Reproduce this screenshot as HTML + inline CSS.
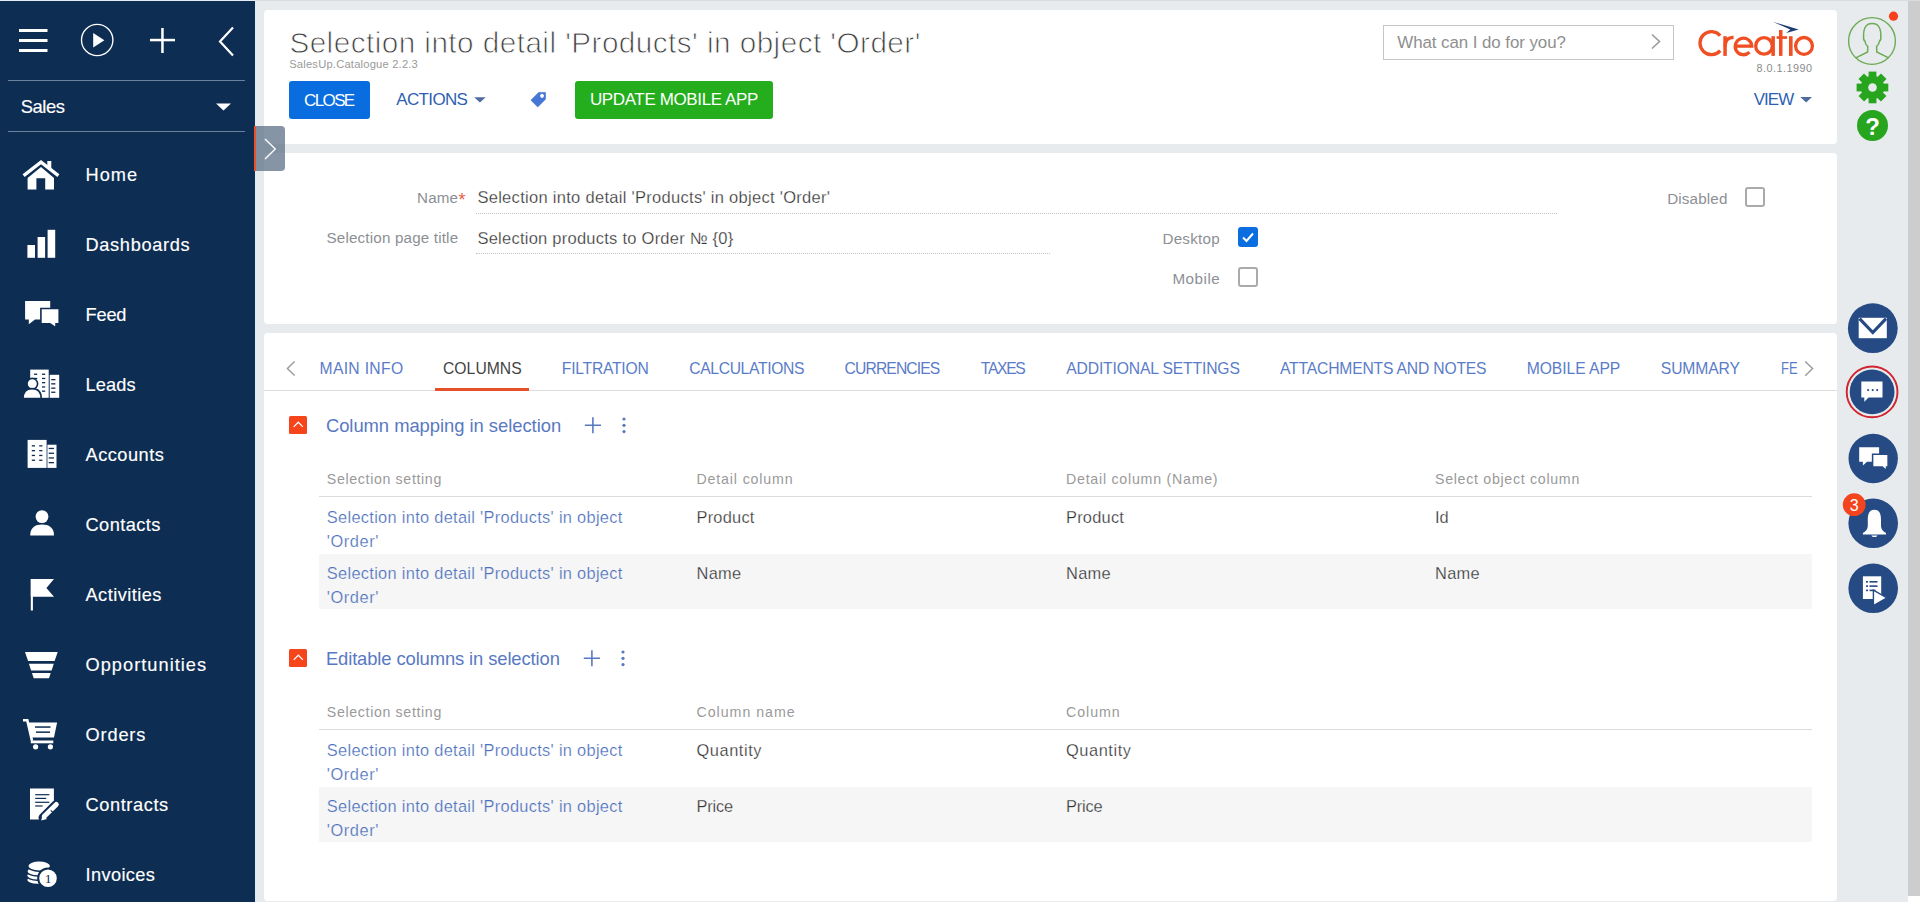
<!DOCTYPE html>
<html><head><meta charset="utf-8">
<style>
*{margin:0;padding:0;box-sizing:border-box}
html,body{width:1920px;height:902px;overflow:hidden;background:#e8ebed;font-family:"Liberation Sans",sans-serif}
.a{position:absolute;white-space:pre;line-height:1}
</style></head><body>
<div style="position:absolute;left:0px;top:0px;width:1920px;height:1px;background:#d9dcde"></div>
<div style="position:absolute;left:0px;top:0px;width:255px;height:1px;background:#e4edf4"></div>
<div style="position:absolute;left:1908px;top:1px;width:12px;height:895px;background:#cdcdcd"></div>
<div style="position:absolute;left:1908px;top:896px;width:12px;height:6px;background:#fff"></div>
<div style="position:absolute;left:0px;top:1px;width:255px;height:901px;background:#0e2d52"></div>
<div style="position:absolute;left:255px;top:1px;width:1px;height:901px;background:#e2ebf3"></div>
<div style="position:absolute;left:8px;top:80px;width:237px;height:1px;background:#6a809b"></div>
<div style="position:absolute;left:8px;top:131px;width:237px;height:1px;background:#6a809b"></div>
<svg style="position:absolute;left:0;top:0" width="255" height="80">
<rect x="19" y="29" width="28.5" height="3" fill="#fff"/>
<rect x="19" y="39" width="28.5" height="3" fill="#fff"/>
<rect x="19" y="49" width="28.5" height="3" fill="#fff"/>
<circle cx="97.2" cy="40" r="15.7" fill="none" stroke="#fff" stroke-width="1.35"/>
<path d="M93.2 33 L104.4 40.2 L93.2 47.4 Z" fill="#fff"/>
<rect x="150" y="38.8" width="25" height="2.5" fill="#fff"/>
<rect x="161.2" y="28" width="2.5" height="25" fill="#fff"/>
<path d="M233 27.5 L220 41.5 L233 55.5" fill="none" stroke="#fff" stroke-width="2.2"/>
</svg>
<div class="a " style="left:20.80px;top:98.32px;font-size:18.4px;color:#fff;letter-spacing:-0.482px;-webkit-text-stroke:0.15px #fff">Sales</div>
<svg style="position:absolute;left:214px;top:102px" width="20" height="10"><path d="M2 1.5 L17 1.5 L9.5 8.5 Z" fill="#fff"/></svg>
<div class="a " style="left:85.50px;top:165.89px;font-size:18.2px;color:#fff;letter-spacing:1.051px;-webkit-text-stroke:0.15px #fff">Home</div>
<div class="a " style="left:85.50px;top:235.89px;font-size:18.2px;color:#fff;letter-spacing:0.674px;-webkit-text-stroke:0.15px #fff">Dashboards</div>
<div class="a " style="left:85.50px;top:305.89px;font-size:18.2px;color:#fff;letter-spacing:-0.162px;-webkit-text-stroke:0.15px #fff">Feed</div>
<div class="a " style="left:85.50px;top:375.89px;font-size:18.2px;color:#fff;letter-spacing:0.128px;-webkit-text-stroke:0.15px #fff">Leads</div>
<div class="a " style="left:85.50px;top:445.89px;font-size:18.2px;color:#fff;letter-spacing:0.505px;-webkit-text-stroke:0.15px #fff">Accounts</div>
<div class="a " style="left:85.50px;top:515.89px;font-size:18.2px;color:#fff;letter-spacing:0.454px;-webkit-text-stroke:0.15px #fff">Contacts</div>
<div class="a " style="left:85.50px;top:585.89px;font-size:18.2px;color:#fff;letter-spacing:0.455px;-webkit-text-stroke:0.15px #fff">Activities</div>
<div class="a " style="left:85.50px;top:655.89px;font-size:18.2px;color:#fff;letter-spacing:1.037px;-webkit-text-stroke:0.15px #fff">Opportunities</div>
<div class="a " style="left:85.50px;top:725.89px;font-size:18.2px;color:#fff;letter-spacing:0.855px;-webkit-text-stroke:0.15px #fff">Orders</div>
<div class="a " style="left:85.50px;top:795.89px;font-size:18.2px;color:#fff;letter-spacing:0.602px;-webkit-text-stroke:0.15px #fff">Contracts</div>
<div class="a " style="left:85.50px;top:865.89px;font-size:18.2px;color:#fff;letter-spacing:0.390px;-webkit-text-stroke:0.15px #fff">Invoices</div>
<svg style="position:absolute;left:0;top:0" width="80" height="902">
<!-- home -->
<path d="M27.6 178 L41 167 L54 178 L54 189.5 L45.2 189.5 L45.2 178.2 L36.4 178.2 L36.4 189.5 L27.6 189.5 Z" fill="#fff"/>
<rect x="47.3" y="161" width="4" height="8" fill="#fff"/>
<path d="M23.6 175.6 L41 162.2 L58.4 175.6" fill="none" stroke="#fff" stroke-width="3.3"/>
<!-- dashboards -->
<rect x="27.4" y="245" width="7.6" height="12.8" fill="#fff"/>
<rect x="37.6" y="237" width="7.5" height="20.8" fill="#fff"/>
<rect x="47.6" y="229.8" width="7.6" height="28" fill="#fff"/>
<!-- feed -->
<path d="M25.1 301 L50.2 301 L50.2 319.5 L35 319.5 L28.8 324.2 L28.8 319.5 L25.1 319.5 Z" fill="#fff"/>
<path d="M40.9 308.5 L59.2 308.5 L59.2 323.7 L56 323.7 L56 328 L50 323.7 L40.9 323.7 Z" fill="#fff" stroke="#0e2d52" stroke-width="1.6"/>
<!-- leads -->
<rect x="30.2" y="369.6" width="18.5" height="28.2" fill="#fff"/>
<rect x="49.7" y="374.8" width="9.5" height="23" fill="#fff"/>
<g fill="#0e2d52">
<rect x="34" y="373.6" width="3.2" height="1.3"/><rect x="42" y="373.6" width="3.2" height="1.3"/>
<rect x="42" y="377.8" width="3.2" height="1.3"/><rect x="42" y="382" width="3.2" height="1.3"/><rect x="42" y="386.3" width="3.2" height="1.3"/><rect x="42" y="390.5" width="3.2" height="1.3"/>
<rect x="34" y="377.8" width="3.2" height="1.3"/>
<rect x="51.2" y="379" width="4.2" height="1.3"/><rect x="51.2" y="383.2" width="4.2" height="1.3"/><rect x="51.2" y="387.5" width="4.2" height="1.3"/><rect x="51.2" y="391.6" width="4.2" height="1.3"/>
</g>
<circle cx="32.3" cy="383.7" r="5.3" fill="#fff" stroke="#0e2d52" stroke-width="1.6"/>
<path d="M23 398.6 C23 391 27.5 388.6 32.1 388.6 C36.7 388.6 41.2 391 41.2 398.6 Z" fill="#fff" stroke="#0e2d52" stroke-width="1.6"/>
<!-- accounts -->
<rect x="27.6" y="439.9" width="19" height="28" fill="#fff"/>
<rect x="47.4" y="444.7" width="9.1" height="23.2" fill="#fff"/>
<g fill="#0e2d52">
<rect x="31.8" y="445.2" width="3.2" height="1.3"/><rect x="39.2" y="445.2" width="3.2" height="1.3"/>
<rect x="31.8" y="450" width="3.2" height="1.3"/><rect x="39.2" y="450" width="3.2" height="1.3"/>
<rect x="31.8" y="454.8" width="3.2" height="1.3"/><rect x="39.2" y="454.8" width="3.2" height="1.3"/>
<rect x="31.8" y="459.6" width="3.2" height="1.3"/><rect x="39.2" y="459.6" width="3.2" height="1.3"/>
<rect x="48.7" y="447.8" width="5.3" height="1.3"/><rect x="48.7" y="452.6" width="5.3" height="1.3"/><rect x="48.7" y="457.3" width="5.3" height="1.3"/><rect x="48.7" y="462" width="5.3" height="1.3"/>
</g>
<!-- contacts -->
<circle cx="42" cy="516.6" r="6.4" fill="#fff"/>
<path d="M30.2 535.4 C30.2 527.5 35.5 524.6 42.1 524.6 C48.7 524.6 54 527.5 54 535.4 Z" fill="#fff"/>
<!-- activities -->
<rect x="30.8" y="579" width="2.1" height="31.5" fill="#fff"/>
<path d="M30.8 579 L54 579 L46.4 588 L54 596.8 L30.8 596.8 Z" fill="#fff"/>
<!-- opportunities -->
<path d="M25 652 L57.7 652 L54.6 661 L28.1 661 Z" fill="#fff"/>
<path d="M28.9 663.8 L53.8 663.8 L51.6 670.5 L31.1 670.5 Z" fill="#fff"/>
<path d="M32 673 L50.7 673 L49 678.2 L33.7 678.2 Z" fill="#fff"/>
<!-- orders -->
<path d="M23 720.2 L27.3 720.2 L32 740.8" fill="none" stroke="#fff" stroke-width="2.6"/>
<path d="M27.6 722.6 L57.1 722.6 L54 737.4 L31 737.4 Z" fill="#fff"/>
<rect x="35" y="726.3" width="15.5" height="1.5" fill="#0e2d52"/>
<rect x="36" y="731.4" width="14" height="1.5" fill="#0e2d52"/>
<rect x="30.8" y="740.5" width="22.5" height="2.8" fill="#fff"/>
<circle cx="35.6" cy="746.8" r="2.6" fill="#fff"/>
<circle cx="50.4" cy="746.8" r="2.6" fill="#fff"/>
<!-- contracts -->
<path d="M30 788.5 L53.9 788.5 L53.9 802.5 L38.8 819.6 L30 819.6 Z" fill="#fff"/>
<g fill="#0e2d52"><rect x="35.2" y="794.1" width="14.1" height="1.2"/><rect x="35.2" y="797.8" width="11" height="1.2"/><rect x="35.2" y="801.7" width="14.1" height="1.2"/><rect x="35.2" y="805.4" width="7.4" height="1.2"/></g>
<path d="M43 817.6 L56 804.8" stroke="#0e2d52" stroke-width="9" stroke-linecap="round"/>
<path d="M44.3 816.3 L56.3 804.5" stroke="#fff" stroke-width="5" stroke-linecap="round"/>
<path d="M41.2 820.6 L42.6 814.6 L47 819 Z" fill="#fff"/>
<path d="M50.8 810.4 L52.6 812.2" stroke="#0e2d52" stroke-width="1.2"/>
<!-- invoices -->
<g fill="#fff" stroke="#0e2d52" stroke-width="1.5">
<ellipse cx="37.5" cy="880" rx="11" ry="4.6"/>
<ellipse cx="37.5" cy="875.6" rx="11" ry="4.6"/>
<ellipse cx="38" cy="871.2" rx="11.2" ry="4.8"/>
<ellipse cx="39.2" cy="866" rx="11.5" ry="5.2"/>
</g>
<circle cx="48" cy="878.2" r="9.8" fill="#fff" stroke="#0e2d52" stroke-width="2"/>
<text x="48" y="883.2" font-family="Liberation Serif" font-size="13.5" fill="#0e2d52" text-anchor="middle">1</text>
</svg>
<div style="position:absolute;left:264px;top:10px;width:1573px;height:134px;background:#fff;border-radius:4px"></div>
<div style="position:absolute;left:264px;top:153px;width:1573px;height:171px;background:#fff;border-radius:4px"></div>
<div style="position:absolute;left:264px;top:333px;width:1573px;height:568px;background:#fff;border-radius:4px"></div>
<div class="a " style="left:289.40px;top:28.46px;font-size:29.7px;color:#404040;letter-spacing:0.458px;-webkit-text-stroke:0.9px #fff">Selection into detail 'Products' in object 'Order'</div>
<div class="a " style="left:289.20px;top:59.27px;font-size:11.2px;color:#9a9a9a;letter-spacing:0.194px;">SalesUp.Catalogue 2.2.3</div>
<div style="position:absolute;left:289px;top:81px;width:81px;height:38px;background:#0a6ddf;border-radius:3px"></div>
<div class="a " style="left:304.10px;top:91.61px;font-size:17px;color:#fff;letter-spacing:-1.633px;">CLOSE</div>
<div class="a " style="left:396.30px;top:91.21px;font-size:17px;color:#2d5fb3;letter-spacing:-0.660px;">ACTIONS</div>
<svg style="position:absolute;left:470px;top:94px" width="20" height="12"><path d="M4.2 3.2 L15.7 3.2 L9.95 8.6 Z" fill="#4f6c9c"/></svg>
<svg style="position:absolute;left:526px;top:88px" width="24" height="24"><g transform="translate(13.7 10.2) rotate(45)"><path d="M0 -8.2 L4.8 -3.4 L4.8 7.6 L-4.8 7.6 L-4.8 -3.4 Z" fill="#4676d6" stroke="#4676d6" stroke-width="0.6" stroke-linejoin="round"/><circle cx="0" cy="-3.3" r="1.9" fill="#fff"/></g></svg>
<div style="position:absolute;left:575px;top:81px;width:198px;height:38px;background:#24ad1d;border-radius:3px"></div>
<div class="a " style="left:589.90px;top:91.31px;font-size:17px;color:#fff;letter-spacing:-0.372px;">UPDATE MOBILE APP</div>
<div style="position:absolute;left:1383px;top:25px;width:291px;height:35px;border:1px solid #c6c6c6;background:#fff"></div>
<div class="a " style="left:1397.30px;top:34.59px;font-size:16.9px;color:#8f8f8f;letter-spacing:-0.063px;">What can I do for you?</div>
<svg style="position:absolute;left:1648px;top:32px" width="16" height="20"><path d="M4 2.5 L11.5 9.5 L4 16.5" fill="none" stroke="#9a9a9a" stroke-width="1.6"/></svg>
<svg style="position:absolute;left:1690px;top:15px" width="135" height="50"><g transform="translate(-1690 -15)" fill="none" stroke="#f04e23" stroke-width="3.3">
<path d="M1720.2 35.6 A11.5 11.5 0 1 0 1720.2 50.6"/>
<path d="M1725.1 46.5 C1725.1 40 1728.3 37.4 1733.6 37.4"/>
<path d="M1735.2 46.2 L1751.8 46.2 A8.3 8.3 0 1 0 1749.5 52.2"/>
<circle cx="1764" cy="45.9" r="8.3"/>
<circle cx="1804" cy="45.9" r="8.4"/>
</g>
<g transform="translate(-1690 -15)" fill="#f04e23">
<rect x="1723.3" y="36.2" width="3.5" height="19.7"/>
<rect x="1771.4" y="36.2" width="3.5" height="19.7"/>
<rect x="1779" y="30" width="3.5" height="25.9"/>
<rect x="1776.7" y="36.2" width="10.4" height="2.7"/>
<rect x="1789" y="36.2" width="3.6" height="19.7"/>
</g>
<path transform="translate(-1690 -15)" d="M1772.8 21.8 L1798.7 29.4 L1786.2 33 L1790.3 29.6 Z" fill="#1d3c72"/>
</svg>
<div class="a " style="left:1756.50px;top:63.46px;font-size:10.8px;color:#8a8a8a;letter-spacing:0.495px;">8.0.1.1990</div>
<div class="a " style="left:1753.70px;top:91.99px;font-size:16.9px;color:#2d5fb3;letter-spacing:-0.898px;">VIEW</div>
<svg style="position:absolute;left:1796px;top:94px" width="20" height="12"><path d="M4.3 3 L16 3 L10.15 8.6 Z" fill="#4f6c9c"/></svg>
<div style="position:absolute;left:255px;top:126px;width:30px;height:45px;background:rgba(88,108,132,0.72);border-radius:0 4px 4px 0"></div>
<div style="position:absolute;left:254px;top:126px;width:2.2px;height:45px;background:#ec5228"></div>
<svg style="position:absolute;left:262px;top:136px" width="16" height="26"><path d="M3 3 L13.3 13 L3 23" fill="none" stroke="#fff" stroke-width="1.3"/></svg>
<div class="a " style="left:417.10px;top:189.83px;font-size:15.2px;color:#8c9094;letter-spacing:0.085px;">Name</div>
<div class="a " style="left:458.60px;top:190.76px;font-size:18px;color:#e8603f;">*</div>
<div class="a " style="left:326.50px;top:230.13px;font-size:15.2px;color:#8c9094;letter-spacing:0.171px;">Selection page title</div>
<div class="a " style="left:477.40px;top:189.43px;font-size:16.5px;color:#333;letter-spacing:0.294px;-webkit-text-stroke:0.25px #fff">Selection into detail 'Products' in object 'Order'</div>
<div class="a " style="left:477.40px;top:229.53px;font-size:16.5px;color:#333;letter-spacing:0.249px;-webkit-text-stroke:0.25px #fff">Selection products to Order № {0}</div>
<div style="position:absolute;left:476px;top:213px;width:1081px;height:1px;border-top:1px dotted #c4c4c4"></div>
<div style="position:absolute;left:476px;top:253px;width:574px;height:1px;border-top:1px dotted #c4c4c4"></div>
<div class="a " style="left:1667.20px;top:190.63px;font-size:15.2px;color:#8c9094;letter-spacing:0.150px;">Disabled</div>
<div style="position:absolute;left:1745px;top:187px;width:20px;height:20px;border:2px solid #aaa;border-radius:3px"></div>
<div class="a " style="left:1162.40px;top:231.13px;font-size:15.2px;color:#8c9094;letter-spacing:0.273px;">Desktop</div>
<div style="position:absolute;left:1238px;top:227px;width:20px;height:20px;background:#0b6ee0;border-radius:3px"></div>
<svg style="position:absolute;left:1238px;top:227px" width="20" height="20"><path d="M5 10.5 L8.5 14 L15 6.5" fill="none" stroke="#fff" stroke-width="2"/></svg>
<div class="a " style="left:1172.40px;top:271.13px;font-size:15.2px;color:#8c9094;letter-spacing:0.524px;">Mobile</div>
<div style="position:absolute;left:1238px;top:267px;width:20px;height:20px;border:2px solid #aaa;border-radius:3px"></div>
<svg style="position:absolute;left:282px;top:358px" width="18" height="22"><path d="M12.6 3.6 L5.4 10.6 L12.6 17.6" fill="none" stroke="#9a9a9a" stroke-width="1.4"/></svg>
<div class="a " style="left:319.50px;top:361.31px;font-size:15.7px;color:#5a7cc8;letter-spacing:0.323px;">MAIN INFO</div>
<div class="a " style="left:443.00px;top:361.31px;font-size:15.7px;color:#444;letter-spacing:0.040px;">COLUMNS</div>
<div class="a " style="left:561.80px;top:361.31px;font-size:15.7px;color:#5a7cc8;letter-spacing:-0.251px;">FILTRATION</div>
<div class="a " style="left:689.20px;top:361.31px;font-size:15.7px;color:#5a7cc8;letter-spacing:-0.348px;">CALCULATIONS</div>
<div class="a " style="left:844.60px;top:361.31px;font-size:15.7px;color:#5a7cc8;letter-spacing:-0.890px;">CURRENCIES</div>
<div class="a " style="left:980.80px;top:361.31px;font-size:15.7px;color:#5a7cc8;letter-spacing:-1.328px;">TAXES</div>
<div class="a " style="left:1066.25px;top:361.31px;font-size:15.7px;color:#5a7cc8;letter-spacing:-0.153px;">ADDITIONAL SETTINGS</div>
<div class="a " style="left:1280.00px;top:361.31px;font-size:15.7px;color:#5a7cc8;letter-spacing:-0.191px;">ATTACHMENTS AND NOTES</div>
<div class="a " style="left:1526.70px;top:361.31px;font-size:15.7px;color:#5a7cc8;letter-spacing:-0.060px;">MOBILE APP</div>
<div class="a " style="left:1660.80px;top:361.31px;font-size:15.7px;color:#5a7cc8;letter-spacing:-0.127px;">SUMMARY</div>
<div class="a " style="left:1780.80px;top:360.00px;font-size:16.3px;color:#5a7cc8;transform:scaleX(0.8);transform-origin:0 0">FE</div>
<svg style="position:absolute;left:1800px;top:358px" width="18" height="22"><path d="M5.2 3.4 L12.6 10.6 L5.2 17.8" fill="none" stroke="#9a9a9a" stroke-width="1.4"/></svg>
<div style="position:absolute;left:264px;top:390px;width:1573px;height:1px;background:#dedede"></div>
<div style="position:absolute;left:435px;top:388px;width:94px;height:3px;background:#e6502a"></div>
<div style="position:absolute;left:289.3px;top:416px;width:18px;height:18px;background:#f6441b;border-radius:1.5px"></div>
<svg style="position:absolute;left:289px;top:416px" width="19" height="18"><path d="M4.7 10.9 L9.3 6.2 L13.9 10.9" fill="none" stroke="#fff" stroke-width="1.25"/></svg>
<div class="a " style="left:325.90px;top:417.32px;font-size:18.4px;color:#5879c2;letter-spacing:-0.033px;">Column mapping in selection</div>
<svg style="position:absolute;left:584px;top:416px" width="18" height="18"><path d="M0.8 9.3 L17 9.3 M8.9 1.2 L8.9 17.3" fill="none" stroke="#5879c2" stroke-width="1.6"/></svg>
<svg style="position:absolute;left:620.75px;top:416px" width="6" height="18"><circle cx="3" cy="3" r="1.6" fill="#5879c2"/><circle cx="3" cy="9.3" r="1.6" fill="#5879c2"/><circle cx="3" cy="15.6" r="1.6" fill="#5879c2"/></svg>
<div class="a " style="left:326.80px;top:471.98px;font-size:14.2px;color:#9a9a9a;letter-spacing:0.650px;">Selection setting</div>
<div class="a " style="left:696.50px;top:471.98px;font-size:14.2px;color:#9a9a9a;letter-spacing:0.848px;">Detail column</div>
<div class="a " style="left:1066.00px;top:471.98px;font-size:14.2px;color:#9a9a9a;letter-spacing:0.758px;">Detail column (Name)</div>
<div class="a " style="left:1435.00px;top:471.98px;font-size:14.2px;color:#9a9a9a;letter-spacing:0.704px;">Select object column</div>
<div style="position:absolute;left:319px;top:496px;width:1493px;height:1px;background:#dcdcdc"></div>
<div style="position:absolute;left:319px;top:554px;width:1493px;height:55px;background:#f6f6f6"></div>
<div class="a " style="left:326.80px;top:509.12px;font-size:16.4px;color:#4d70bd;letter-spacing:0.300px;-webkit-text-stroke:0.22px #fff">Selection into detail 'Products' in object</div>
<div class="a " style="left:326.80px;top:533.42px;font-size:16.4px;color:#4d70bd;letter-spacing:0.569px;-webkit-text-stroke:0.22px #fff">'Order'</div>
<div class="a " style="left:696.50px;top:509.12px;font-size:16.4px;color:#333;letter-spacing:0.230px;-webkit-text-stroke:0.25px #fff">Product</div>
<div class="a " style="left:1066.00px;top:509.12px;font-size:16.4px;color:#333;letter-spacing:0.230px;-webkit-text-stroke:0.25px #fff">Product</div>
<div class="a " style="left:1435.00px;top:509.12px;font-size:16.4px;color:#333;letter-spacing:0.021px;-webkit-text-stroke:0.25px #fff">Id</div>
<div class="a " style="left:326.80px;top:564.62px;font-size:16.4px;color:#4d70bd;letter-spacing:0.300px;-webkit-text-stroke:0.22px #f6f6f6">Selection into detail 'Products' in object</div>
<div class="a " style="left:326.80px;top:588.92px;font-size:16.4px;color:#4d70bd;letter-spacing:0.569px;-webkit-text-stroke:0.22px #f6f6f6">'Order'</div>
<div class="a " style="left:696.50px;top:564.62px;font-size:16.4px;color:#333;letter-spacing:0.318px;-webkit-text-stroke:0.25px #f6f6f6">Name</div>
<div class="a " style="left:1066.00px;top:564.62px;font-size:16.4px;color:#333;letter-spacing:0.318px;-webkit-text-stroke:0.25px #f6f6f6">Name</div>
<div class="a " style="left:1435.00px;top:564.62px;font-size:16.4px;color:#333;letter-spacing:0.318px;-webkit-text-stroke:0.25px #f6f6f6">Name</div>
<div style="position:absolute;left:289.3px;top:649px;width:18px;height:18px;background:#f6441b;border-radius:1.5px"></div>
<svg style="position:absolute;left:289px;top:649px" width="19" height="18"><path d="M4.7 10.9 L9.3 6.2 L13.9 10.9" fill="none" stroke="#fff" stroke-width="1.25"/></svg>
<div class="a " style="left:325.90px;top:650.32px;font-size:18.4px;color:#5879c2;letter-spacing:-0.114px;">Editable columns in selection</div>
<svg style="position:absolute;left:583px;top:649px" width="18" height="18"><path d="M0.8 9.3 L17 9.3 M8.9 1.2 L8.9 17.3" fill="none" stroke="#5879c2" stroke-width="1.6"/></svg>
<svg style="position:absolute;left:619.9px;top:649px" width="6" height="18"><circle cx="3" cy="3" r="1.6" fill="#5879c2"/><circle cx="3" cy="9.3" r="1.6" fill="#5879c2"/><circle cx="3" cy="15.6" r="1.6" fill="#5879c2"/></svg>
<div class="a " style="left:326.80px;top:704.98px;font-size:14.2px;color:#9a9a9a;letter-spacing:0.650px;">Selection setting</div>
<div class="a " style="left:696.50px;top:704.98px;font-size:14.2px;color:#9a9a9a;letter-spacing:0.985px;">Column name</div>
<div class="a " style="left:1066.00px;top:704.98px;font-size:14.2px;color:#9a9a9a;letter-spacing:0.964px;">Column</div>
<div style="position:absolute;left:319px;top:729px;width:1493px;height:1px;background:#dcdcdc"></div>
<div style="position:absolute;left:319px;top:787px;width:1493px;height:55px;background:#f6f6f6"></div>
<div class="a " style="left:326.80px;top:742.12px;font-size:16.4px;color:#4d70bd;letter-spacing:0.300px;-webkit-text-stroke:0.22px #fff">Selection into detail 'Products' in object</div>
<div class="a " style="left:326.80px;top:766.42px;font-size:16.4px;color:#4d70bd;letter-spacing:0.569px;-webkit-text-stroke:0.22px #fff">'Order'</div>
<div class="a " style="left:696.50px;top:742.12px;font-size:16.4px;color:#333;letter-spacing:0.560px;-webkit-text-stroke:0.25px #fff">Quantity</div>
<div class="a " style="left:1066.00px;top:742.12px;font-size:16.4px;color:#333;letter-spacing:0.560px;-webkit-text-stroke:0.25px #fff">Quantity</div>
<div class="a " style="left:326.80px;top:797.62px;font-size:16.4px;color:#4d70bd;letter-spacing:0.300px;-webkit-text-stroke:0.22px #f6f6f6">Selection into detail 'Products' in object</div>
<div class="a " style="left:326.80px;top:821.92px;font-size:16.4px;color:#4d70bd;letter-spacing:0.569px;-webkit-text-stroke:0.22px #f6f6f6">'Order'</div>
<div class="a " style="left:696.50px;top:797.62px;font-size:16.4px;color:#333;letter-spacing:-0.154px;-webkit-text-stroke:0.25px #f6f6f6">Price</div>
<div class="a " style="left:1066.00px;top:797.62px;font-size:16.4px;color:#333;letter-spacing:-0.154px;-webkit-text-stroke:0.25px #f6f6f6">Price</div>
<svg style="position:absolute;left:1837px;top:0" width="71" height="902"><g transform="translate(-1837 0)">
<circle cx="1872" cy="41" r="23.4" fill="none" stroke="#6dab55" stroke-width="1.4"/>
<path d="M1855.8 57.8 L1867.6 52 L1867.8 46.6 C1866 45 1865.2 43.2 1865 41.2 C1863.9 40.6 1863.4 38.8 1863.6 37 C1863.3 29.5 1865 23.6 1872.2 23.6 C1879.4 23.6 1881.1 29.5 1880.8 37 C1881 38.8 1880.5 40.6 1879.4 41.2 C1879.2 43.2 1878.4 45 1876.6 46.6 L1876.8 52 L1888.6 57.8" fill="none" stroke="#6dab55" stroke-width="1.5"/>
<circle cx="1893.5" cy="16.2" r="4.6" fill="#f5401a"/>
<g fill="#27a51e">
<circle cx="1872.5" cy="87.5" r="11.8"/>
<g id="teeth">
<rect x="1868.6" y="71.6" width="7.8" height="31.7"/>
<rect x="1856.6" y="83.6" width="31.7" height="7.8"/>
<rect x="1868.6" y="71.6" width="7.8" height="31.7" transform="rotate(45 1872.5 87.5)"/>
<rect x="1868.6" y="71.6" width="7.8" height="31.7" transform="rotate(-45 1872.5 87.5)"/>
</g>
</g>
<circle cx="1872.5" cy="87.5" r="4.3" fill="#e8ebed"/>
<circle cx="1872.5" cy="125.5" r="15.5" fill="#27a51e"/>
<text x="1872.5" y="134.5" font-family="Liberation Sans" font-weight="bold" font-size="24" fill="#fff" text-anchor="middle">?</text>
<!-- email -->
<circle cx="1872.8" cy="328.2" r="24.9" fill="#264a84"/>
<rect x="1858.7" y="317.8" width="28.1" height="20.4" fill="#fff"/>
<path d="M1859.5 318.6 L1872.8 332.5 L1886 318.6" fill="none" stroke="#264a84" stroke-width="3.2"/>
<!-- chat -->
<circle cx="1872.1" cy="391.9" r="25.4" fill="none" stroke="#d0242e" stroke-width="1.9"/>
<circle cx="1872.1" cy="391.9" r="22.4" fill="#264a84"/>
<path d="M1861.3 381.5 L1882.5 381.5 L1882.5 397.6 L1868.5 397.6 L1864.3 401.8 L1864.3 397.6 L1861.3 397.6 Z" fill="#fff"/>
<g fill="#264a84"><circle cx="1868.1" cy="390.1" r="1.05"/><circle cx="1872.7" cy="390.1" r="1.05"/><circle cx="1877.2" cy="390.1" r="1.05"/></g>
<!-- feed -->
<circle cx="1873.2" cy="458.5" r="24.7" fill="#264a84"/>
<path d="M1859.2 447.3 L1879.1 447.3 L1879.1 461.7 L1867 461.7 L1862.9 465.6 L1862.9 461.7 L1859.2 461.7 Z" fill="#fff"/>
<path d="M1872.6 454.2 L1888.1 454.2 L1888.1 467.1 L1886.5 467.1 L1886.5 470.6 L1882.3 467.1 L1872.6 467.1 Z" fill="#fff" stroke="#264a84" stroke-width="1.5"/>
<!-- bell -->
<circle cx="1873.2" cy="523.3" r="24.8" fill="#264a84"/>
<path d="M1874.4 509.7 C1869 509.7 1867.8 514.5 1867.8 520 L1867.8 526 C1867.8 529.5 1865.5 531.5 1862.9 533 L1862.9 534.4 L1886 534.4 L1886 533 C1883.3 531.5 1881 529.5 1881 526 L1881 520 C1881 514.5 1879.8 509.7 1874.4 509.7 Z" fill="#fff"/>
<path d="M1871.5 535.6 C1871.8 537.6 1877 537.6 1877.3 535.6 Z" fill="#fff"/>
<circle cx="1854.2" cy="504.7" r="11.4" fill="#f3441d"/>
<text x="1854.2" y="510.6" font-family="Liberation Sans" font-size="16" fill="#fff" text-anchor="middle">3</text>
<!-- process -->
<circle cx="1873.2" cy="588.3" r="24.8" fill="#264a84"/>
<path d="M1862.9 576.3 L1881.2 576.3 L1881.2 599 L1862.9 599 Z" fill="#fff"/>
<g fill="#264a84"><rect x="1866" y="581" width="2" height="1.6"/><rect x="1869.5" y="581" width="8" height="1.6"/><rect x="1866" y="585.3" width="2" height="1.6"/><rect x="1869.5" y="585.3" width="8" height="1.6"/><rect x="1866" y="589.6" width="2" height="1.6"/><rect x="1869.5" y="589.6" width="6" height="1.6"/></g>
<path d="M1873.4 590.2 L1887 597.9 L1873.4 605.6 Z" fill="#fff" stroke="#264a84" stroke-width="1.4"/>
</g></svg>
</body></html>
